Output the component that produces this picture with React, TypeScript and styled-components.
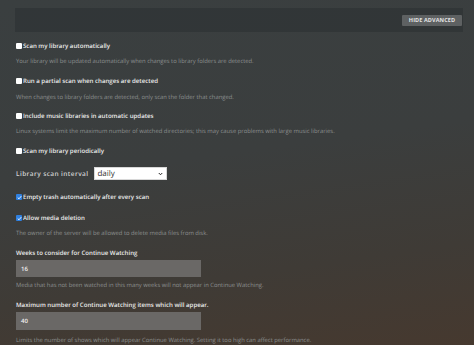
import React from "react";
import styled, { createGlobalStyle } from "styled-components";

const Global = createGlobalStyle`
  html, body { margin: 0; padding: 0; }
  body {
    width: 474px;
    height: 345px;
    overflow: hidden;
    font-family: "Open Sans", "Noto Sans", sans-serif;
    text-rendering: geometricPrecision;
    background: linear-gradient(172deg, #3a3f40 0%, #3b3e3e 45%, #3f3b36 75%, #46392f 100%);
  }
`;

const Page = styled.div`
  width: 474px;
  height: 345px;
  display: flex;
  flex-direction: column;
  padding-left: 16px;
  box-sizing: border-box;
`;

const TopBar = styled.div`
  margin: 8px 11px 0 -1px;
  height: 24px;
  background: rgba(40, 44, 46, 0.45);
  display: flex;
  align-items: center;
  justify-content: flex-end;
  padding-right: 1px;
`;

const HideButton = styled.button`
  border: none;
  background: #5e6162;
  color: #e4e4e4;
  font-family: "Open Sans", sans-serif;
  font-weight: 700;
  font-size: 5.5px;
  letter-spacing: 0.1px;
  height: 11px;
  width: 60px;
  padding: 0;
  border-radius: 1px;
  display: flex;
  align-items: center;
  justify-content: center;
`;

const CheckRow = styled.label<{ $mt: number }>`
  margin-top: ${(p) => p.$mt}px;
  height: 10px;
  display: flex;
  align-items: center;
  gap: 1px;
  color: #ececec;
  font-weight: 600;
  font-size: 6.1px;
  line-height: 10px;
`;

const Box = styled.span<{ $checked?: boolean }>`
  width: 6px;
  height: 6px;
  border-radius: 1px;
  background: ${(p) => (p.$checked ? "#2f80e0" : "#ffffff")};
  display: flex;
  align-items: center;
  justify-content: center;
  flex: none;
`;

const Desc = styled.div<{ $mt: number }>`
  margin-top: ${(p) => p.$mt}px;
  height: 10px;
  line-height: 10px;
  color: #8d9090;
  font-size: 5.85px;
  white-space: nowrap;
`;

const FieldLabel = styled.div<{ $mt: number }>`
  margin-top: ${(p) => p.$mt}px;
  height: 10px;
  line-height: 10px;
  color: #ececec;
  font-weight: 600;
  font-size: 6.1px;
`;

const IntervalRow = styled.div<{ $mt: number }>`
  margin-top: ${(p) => p.$mt}px;
  display: flex;
  align-items: center;
  gap: 6px;
  color: #d4d4d4;
  font-weight: 600;
  font-size: 6.5px;
  letter-spacing: 0.4px;
`;

const Select = styled.div`
  width: 73px;
  height: 13px;
  background: #ffffff;
  border: 1px solid #d8d8d8;
  box-sizing: border-box;
  display: flex;
  align-items: center;
  justify-content: space-between;
  padding: 0 3px 0 2px;
  color: #333;
  font-size: 8px;
  font-weight: 400;
  letter-spacing: 0;
`;

const TextInput = styled.div<{ $mt: number; $h: number }>`
  margin-top: ${(p) => p.$mt}px;
  width: 185px;
  height: ${(p) => p.$h}px;
  background: #6a6866;
  display: flex;
  align-items: center;
  padding-left: 5px;
  box-sizing: border-box;
  color: #f0f0f0;
  font-weight: 600;
  font-size: 6px;
`;

const Check = ({ checked }: { checked?: boolean }) => (
  <Box $checked={checked}>
    {checked && (
      <svg width="5" height="5" viewBox="0 0 10 10">
        <path d="M1.5 5.2 L4 7.6 L8.6 2.2" fill="none" stroke="#fff" strokeWidth="1.8" />
      </svg>
    )}
  </Box>
);

export default function App() {
  return (
    <>
      <Global />
      <Page>
        <TopBar>
          <HideButton>HIDE ADVANCED</HideButton>
        </TopBar>

        <CheckRow $mt={9}>
          <Check />
          Scan my library automatically
        </CheckRow>
        <Desc $mt={5}>
          Your library will be updated automatically when changes to library folders are detected.
        </Desc>

        <CheckRow $mt={10}>
          <Check />
          Run a partial scan when changes are detected
        </CheckRow>
        <Desc $mt={6}>
          When changes to library folders are detected, only scan the folder that changed.
        </Desc>

        <CheckRow $mt={9}>
          <Check />
          Include music libraries in automatic updates
        </CheckRow>
        <Desc $mt={5}>
          Linux systems limit the maximum number of watched directories; this may cause problems with large music libraries.
        </Desc>

        <CheckRow $mt={10}>
          <Check />
          Scan my library periodically
        </CheckRow>

        <IntervalRow $mt={11}>
          Library scan interval
          <Select>
            daily
            <svg width="5" height="4" viewBox="0 0 10 8">
              <path d="M1.5 2 L5 5.5 L8.5 2" fill="none" stroke="#222" strokeWidth="2" />
            </svg>
          </Select>
        </IntervalRow>

        <CheckRow $mt={12}>
          <Check checked />
          Empty trash automatically after every scan
        </CheckRow>

        <CheckRow $mt={11}>
          <Check checked />
          Allow media deletion
        </CheckRow>
        <Desc $mt={5}>The owner of the server will be allowed to delete media files from disk.</Desc>

        <FieldLabel $mt={10}>Weeks to consider for Continue Watching</FieldLabel>
        <TextInput $mt={2} $h={17}>16</TextInput>
        <Desc $mt={3}>
          Media that has not been watched in this many weeks will not appear in Continue Watching.
        </Desc>

        <FieldLabel $mt={10}>Maximum number of Continue Watching items which will appear.</FieldLabel>
        <TextInput $mt={2} $h={18}>40</TextInput>
        <Desc $mt={5}>
          Limits the number of shows which will appear Continue Watching. Setting it too high can affect performance.
        </Desc>
      </Page>
    </>
  );
}
